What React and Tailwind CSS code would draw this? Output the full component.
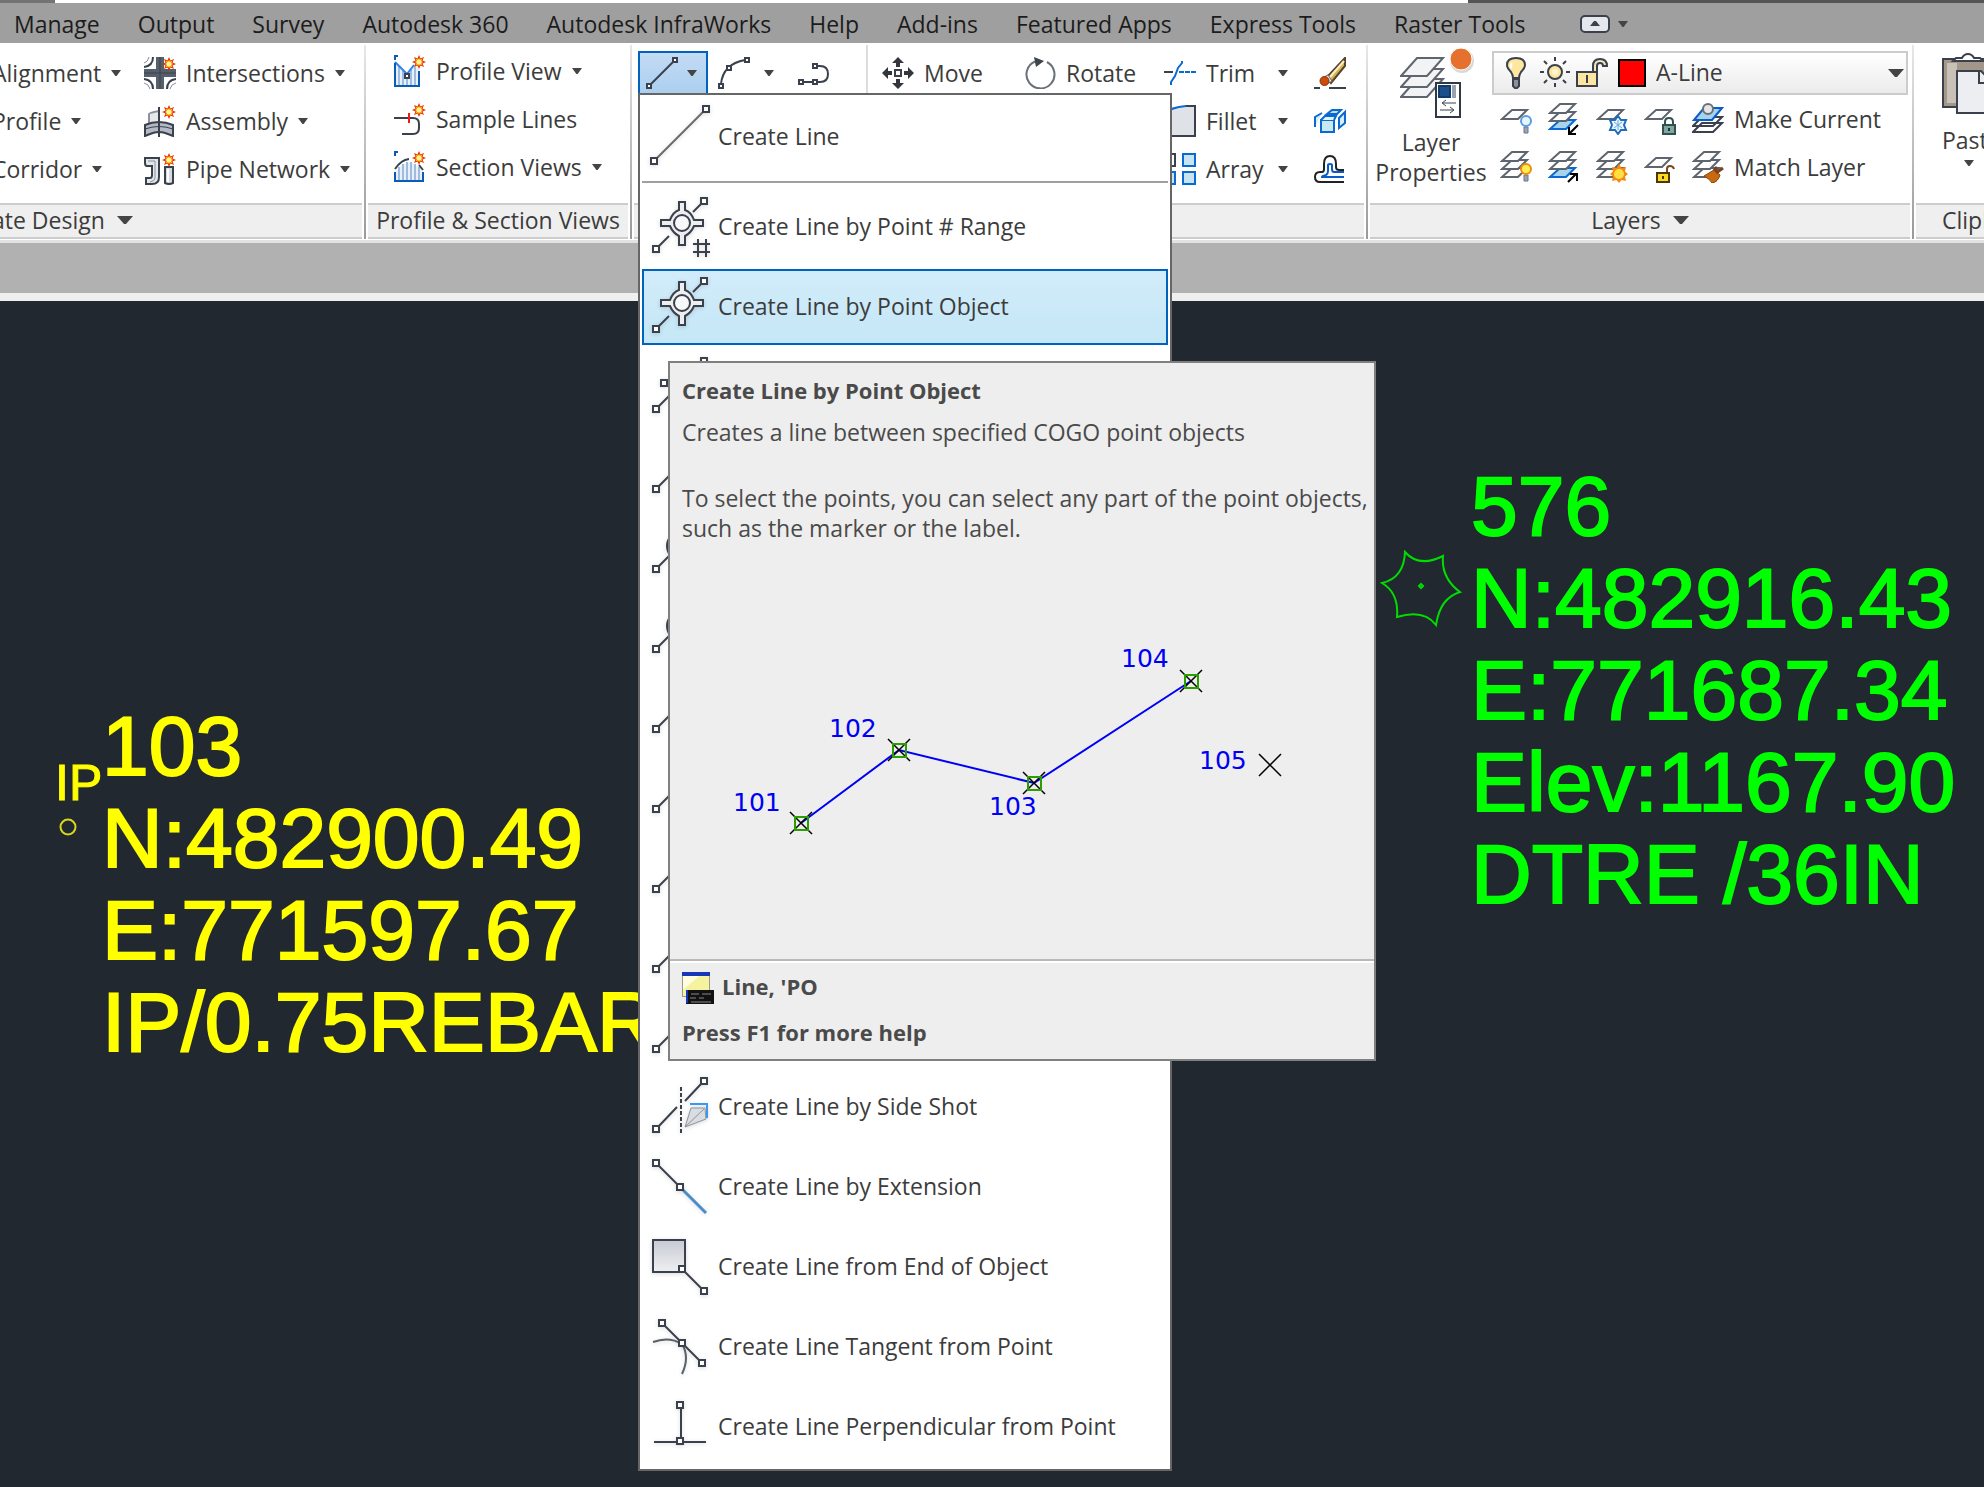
import React from 'react';
import clsx from 'clsx';

const tabs = [
  'Manage',
  'Output',
  'Survey',
  'Autodesk 360',
  'Autodesk InfraWorks',
  'Help',
  'Add-ins',
  'Featured Apps',
  'Express Tools',
  'Raster Tools',
];

const INK = '#3a414c';

const Caret = ({wide}) => (
  <svg className={wide ? 'w-4 h-2 shrink-0' : 'w-[10px] h-[6px] shrink-0'} viewBox="0 0 16 8" preserveAspectRatio="none">
    <path d="M0 0h16L9 8H7z" fill="#444" />
  </svg>
);

const Icon = ({children, className}) => (
  <svg className={clsx('w-8 h-8 shrink-0', className)} viewBox="0 0 32 32" fill="none" stroke={INK} strokeWidth="2">
    {children}
  </svg>
);

// small "new object" burst in the top right corner of the create icons
const Burst = () => (
  <g transform="translate(18 0)" stroke="none">
    <path d="M7 0l1.5 3.5L12 2l-1.500 3.500L14 7l-3.500 1.500L12 12l-3.500-1.500L7 14l-1.500-3.500L2 12l1.500-3.500L0 7l3.500-1.500L2 2l3.500 1.500z" fill="#e03000" />
    <path d="M7 2.500l1 2 2.500-1-1 2.500 2 1-2 1 1 2.500-2.500-1-1 2-1-2-2.500 1 1-2.500-2-1 2-1-1-2.500 2.500 1z" fill="#ffb400" />
    <circle cx="7" cy="7" r="2.500" fill="#fff2a0" />
  </g>
);

const IntersectionIcon = () => (
  <Icon>
    <path d="M12 0h8v12h12v8H20v12h-8V20H0v-8h12z" fill="#56606c" stroke="none" />
    <path d="M0 16h32M16 0v32" stroke="#3a414c" strokeWidth="1" />
    <path d="M0 10q9-1 9-10M0 22q9 1 9 10M32 22q-9 1-9 10" />
    <path d="M0 26q5 1 6 6M32 26q-5 1-6 6M0 6q4-1 5-6" strokeWidth="1" stroke="#8b929c" />
    <Burst />
  </Icon>
);

const AssemblyIcon = () => (
  <Icon>
    <path d="M5 18V9q0-1 10-3v12z" fill="#e6e8ec" stroke="#8b929c" />
    <path d="M1 31V20q14-6 28 0v11l-5-2q-9-4-18 0z" fill="#b3bac6" />
    <path d="M1 24q14-5 28 0" strokeWidth="1" />
    <path d="M15 2v30" />
    <Burst />
  </Icon>
);

const PipeIcon = () => (
  <Icon>
    <path d="M1 5h14v19q0 7-7 7H2v-6h4q2 0 2-3v-9H3q-2 0-2-3z" fill="#e2e5ea" />
    <path d="M4 8h7v17q0 3-5 4" stroke="#8b929c" strokeWidth="1" />
    <path d="M21 30V14h8v16q-4 2-8 0z" fill="#d5d9e0" />
    <path d="M24 16v13" stroke="#fff" />
    <Burst />
  </Icon>
);

const ProfileViewIcon = () => (
  <Icon>
    <path d="M2 8l10 11L20 9l5 5v16H2z" fill="#e8f0fa" stroke="none" />
    <path d="M5 12v18M9 16v14M13 20v10M17 14v16M21 12v18" stroke="#9fbbe0" />
    <path d="M1 5V1h3" stroke="#0a5cb8" />
    <path d="M1 7l12 12 7-9" stroke="#2f83e8" />
    <path d="M1 8v23h24V16" stroke="#0a5cb8" />
    <path d="M11 19h4v4h-4z" fill="#fff" />
    <Burst />
  </Icon>
);

const SampleLinesIcon = () => (
  <Icon>
    <path d="M0 15h19q6 0 6 6v4q0 6-6 6H8" />
    <path d="M15 10v10" stroke="#f01818" />
    <Burst />
  </Icon>
);

const SectionViewsIcon = () => (
  <Icon>
    <path d="M2 20q13-17 26 0v10H2z" fill="#e8f0fa" stroke="none" />
    <path d="M5 16v14M9 13v17M13 11v19M17 11v19M21 13v17M25 16v14" stroke="#9fbbe0" />
    <path d="M1 5V1h3" stroke="#0a5cb8" />
    <path d="M1 18Q7 9 15 8M25 14l4 5" />
    <path d="M1 21v9h28v-9" stroke="#0a5cb8" />
    <Burst />
  </Icon>
);

const LineIcon = () => (
  <Icon>
    <path d="M5 27L27 5" />
    <path d="M1 27h4v4H1zM27 1h4v4h-4z" fill="#fff" />
  </Icon>
);

const ArcIcon = () => (
  <Icon>
    <path d="M3 27Q5 7 27 3" />
    <path d="M1 27h4v4H1zM9 9h4v4H9zM27 1h4v4h-4z" fill="#fff" />
  </Icon>
);

const PolylineIcon = () => (
  <Icon>
    <path d="M5 25h17q8 0 8-8t-8-8h-2" />
    <path d="M1 23h4v4H1zM15 23h4v4h-4zM15 7h4v4h-4z" fill="#fff" />
  </Icon>
);

const MoveIcon = () => (
  <Icon>
    <path d="M13 13h6v6h-6z" />
    <path d="M16 0l6 6h-4v4h-4V6h-4zM16 32l6-6h-4v-4h-4v4h-4zM0 16l6-6v4h4v4H6v4zM32 16l-6-6v4h-4v4h4v4z" fill="#33373d" stroke="none" />
  </Icon>
);

const RotateIcon = () => (
  <Icon>
    <path d="M11 4.500A14 14 0 1 0 23 5" stroke="#6b7078" />
    <path d="M10 0l10 4-8 6z" fill="#3f444c" stroke="none" />
  </Icon>
);

const TrimIcon = () => (
  <Icon>
    <path d="M0 15h9" />
    <path d="M7 28v-3l4-6 3-8 4-5V4" stroke="#0a6ad0" />
    <path d="M15 15h17" stroke="#0a6ad0" strokeDasharray="5 1" />
  </Icon>
);

const FilletIcon = () => (
  <Icon>
    <path d="M0 8Q8 1 16 1h15v30H0z" fill="#dfe2e6" stroke="none" />
    <path d="M22 1h9v30H0" />
    <path d="M0 10Q6 2 22 1" stroke="#0a6ad0" />
  </Icon>
);

const ArrayIcon = () => (
  <Icon>
    <path d="M1 1h10v12H1z" fill="#fff" />
    <path d="M19 1h12v12H19zM1 19h10v12H1zM19 19h12v12H19z" fill="#c8e4f2" stroke="#0a6ad0" />
  </Icon>
);

const EraserIcon = () => (
  <Icon>
    <path d="M31 1L13 20l4 6L31 9z" fill="#d8b25a" stroke="#54452a" />
    <path d="M30 4L15 21" stroke="#fff0c0" />
    <path d="M14 18l4 6-3 2-5-6z" fill="#e8eaee" stroke="#666" strokeWidth="1" />
    <circle cx="10.500" cy="24" r="4.500" fill="#d04a08" stroke="#8a3208" strokeWidth="1" />
    <path d="M0 31h6M15 31h17" />
  </Icon>
);

const ExplodeIcon = () => (
  <Icon>
    <path d="M13 9l5-4h9l-4 4z" fill="#b9e0f0" stroke="#0a6ad0" />
    <path d="M1 22V12l7-4M25 23l6-5V7l-6 6z" fill="#d5edf6" stroke="#0a6ad0" />
    <path d="M7 15h13v12H7z" fill="#c8e8f4" stroke="#0a6ad0" />
    <path d="M7 15l4-4h11l-2 4" stroke="#0a6ad0" fill="#e2f3fa" />
  </Icon>
);

const OffsetIcon = () => (
  <Icon>
    <path d="M30 29H6q-5 0-5-5t5-5h2q2 0 2-3v-5q0-8 6-8t6 8v3q0 3 3 3h5" stroke="#222" />
    <path d="M30 24H8q0-1 4-2 2-1 2-4v-6q0-1 2-1t2 1v4q0 3 2 3h10" stroke="#0a5cc8" />
  </Icon>
);

const Sheet = ({y = 7, fill = '#fff', stroke = '#5f656f'}) => (
  <path d={`M12 ${y}h15l-9 9H2z`} fill={fill} stroke={stroke} />
);

const Stack = ({bottom, top}) => (
  <g>
    <Sheet y={17} fill={bottom ? '#a5d4ec' : '#fff'} stroke={bottom || '#5f656f'} />
    <Sheet y={9} />
    <Sheet y={1} fill={top ? '#a5d4ec' : '#fff'} stroke={top || '#5f656f'} />
  </g>
);

const Bulb = ({ring, fill}) => (
  <g>
    <path d="M24 24h4v6h-4z" fill="#9aa6b8" stroke="#6d7786" strokeWidth="1" />
    <circle cx="26" cy="18" r="5" fill={fill} stroke={ring} />
  </g>
);

const LayerOffIcon = () => <Icon><Sheet /><Bulb ring="#5b9be0" fill="#e8f4ff" /></Icon>;
const LayerOnIcon = () => <Icon><Stack /><Bulb ring="#f08c10" fill="#ffee50" /></Icon>;

const LayerIsolateIcon = () => (
  <Icon><Stack bottom="#0a6ad0" /><path d="M30 22l-8 8M21 24v7h7" stroke="#000" /></Icon>
);

const LayerUnisolateIcon = () => (
  <Icon><Stack bottom="#0a6ad0" /><path d="M20 31l8-8M22 23h7v7" stroke="#000" /></Icon>
);

const LayerFreezeIcon = () => (
  <Icon>
    <Sheet />
    <path d="M22 13l3 4h5l-2 5 2 5h-5l-3 4-3-4h-5l2-5-2-5h5z" fill="#e8f6ff" stroke="#1f6cb8" />
    <path d="M22 17v10M18 19l8 6M26 19l-8 6" stroke="#6aa8dc" strokeWidth="1" />
  </Icon>
);

const LayerThawIcon = () => (
  <Icon>
    <Stack />
    <path d="M23 13l2.500 4 4.500-1-1 4.500 3 2.500-3 2.500 1 4.500-4.500-1-2.500 3-2.500-3-4.500 1 1-4.500-3-2.500 3-2.500-1-4.500 4.500 1z" fill="#f58a10" stroke="none" />
    <circle cx="23" cy="23" r="5" fill="#ffe040" stroke="none" />
  </Icon>
);

const LayerLockIcon = () => (
  <Icon>
    <Sheet />
    <path d="M21 22v-3q0-4 4-4t4 4v3" stroke="#33504e" />
    <path d="M19 22h12v9H19z" fill="#7fa8a2" stroke="#33504e" />
    <path d="M25 25v3" stroke="#1f3432" />
  </Icon>
);

const LayerUnlockIcon = () => (
  <Icon>
    <Sheet />
    <path d="M23 22v-4q0-3 3-3t4 3" stroke="#7a4420" />
    <path d="M13 22h12v9H13z" fill="#ffd820" stroke="#4a3808" />
    <path d="M19 25v3" stroke="#4a3808" />
  </Icon>
);

const MakeCurrentIcon = () => (
  <Icon>
    <path d="M10 20h20l-9 9H1zM10 14h20l-9 9H1z" fill="#fff" />
    <path d="M12 5h18L20 17H2z" fill="#a5d4ec" stroke="#0a5cc8" />
    <circle cx="16" cy="6" r="5" fill="#e4e6ea" stroke="#6b7078" />
  </Icon>
);

const MatchLayerIcon = () => (
  <Icon>
    <Stack />
    <path d="M12 25l10-6 6 5q-2 7-8 8-2-4-8-7z" fill="#c86a10" stroke="#8a4408" strokeWidth="1" />
    <path d="M24 22l7-5M22 20l3-4" stroke="#7a4420" strokeWidth="3" />
  </Icon>
);

const OnBulbIcon = () => (
  <Icon>
    <path d="M13 21q0-3-2-6-4-4-4-7 0-7 9-7t9 7q0 3-4 7-2 3-2 6z" fill="#fde7a0" />
    <path d="M13 22v7l3 3 3-3v-7z" fill="#8b929c" />
    <path d="M12 6q-2 3 0 5" stroke="#fff" />
  </Icon>
);

const SunIcon = () => (
  <Icon>
    <circle cx="15" cy="15" r="7" fill="#fde7a0" />
    <circle cx="15" cy="15" r="3" fill="#fff6d0" stroke="none" />
    <path d="M15 0v4M15 26v4M0 15h4M26 15h4M4 4l3 3M23 23l3 3M26 4l-3 3M7 23l-3 3" />
  </Icon>
);

const OpenLockIcon = () => (
  <Icon>
    <path d="M17 15V9q0-7 7-7t7 7h-4q0-3-3-3t-3 3v6z" fill="#f0e6c0" />
    <path d="M1 15h20v14H1z" fill="#fde7a0" />
    <path d="M11 18v8" />
  </Icon>
);

const LayerPropertiesIcon = () => (
  <svg className="w-[76px] h-[72px]" viewBox="0 0 76 72" fill="none" stroke="#5f656f" strokeWidth="2">
    <path d="M17 32h26L27 50H1z" fill="#f2f3f4" />
    <path d="M17 22h26L27 40H1z" fill="#f2f3f4" />
    <path d="M17 11h26L27 29H1z" fill="#f2f3f4" />
    <path d="M36 36h24v34H36z" fill="#fff" stroke="#2f3844" />
    <path d="M39 39h11v11H39z" fill="#1c4f8c" stroke="#123a6a" />
    <path d="M54 38v13" stroke="#9aa2ae" strokeWidth="4" />
    <path d="M43 56h13M40 63h13M46 53l-4 3 4 3M50 60l4 3-4 3" stroke={INK} strokeWidth="1" />
    <circle cx="62" cy="14" r="12" fill="#000" opacity=".15" stroke="none" />
    <circle cx="61" cy="12" r="11" fill="#e6702e" stroke="#fff" strokeWidth="1" />
  </svg>
);

const PasteIcon = () => (
  <svg className="w-[68px] h-16" viewBox="0 0 68 64" fill="none" stroke={INK} strokeWidth="2">
    <path d="M1 6h50v48H1z" fill="#a3978a" />
    <path d="M5 10h10v40H5z" fill="#c9c1b8" stroke="none" />
    <path d="M11 8l3-3h6q2-4 6-4t6 4h6l3 3z" fill="#fff" />
    <path d="M15 18h24l12 12v30H15z" fill="#eceef2" />
    <path d="M37 18v12h14" />
  </svg>
);

const Node = ({x, y}) => <rect x={x + 1} y={y + 1} width="6" height="6" fill="#fff" />;

const MenuIcon = ({children}) => (
  <svg className="w-16 h-16 shrink-0 drop-shadow-sm" viewBox="0 0 64 64" fill="none" stroke={INK} strokeWidth="2">
    {children}
  </svg>
);

const Marker = () => (
  <g>
    <path d="M45 17l8-8M11 51l10-10" />
    <path
      d="M31 7h6v8q6 2 9 10h9v6h-9q-3 7-9 10v9h-6v-9q-6-3-9-10h-9v-6h9q3-8 9-10z"
      fill="#eceef0"
    />
    <circle cx="34" cy="28" r="8" fill="#f6f8fa" />
    <Node x={52} y={2} />
    <Node x={4} y={50} />
  </g>
);

const Segment = ({children}) => (
  <MenuIcon>
    <path d="M10 52L54 8" />
    {children}
    <Node x={52} y={2} />
    <Node x={4} y={50} />
  </MenuIcon>
);

const menuItems = [
  {
    label: 'Create Line by Point # Range',
    icon: (
      <MenuIcon>
        <Marker />
        <path d="M50 44v18M58 44v18M45 49h17M45 57h17" />
      </MenuIcon>
    ),
  },
  {label: 'Create Line by Point Object', icon: <MenuIcon><Marker /></MenuIcon>, active: true},
  {name: 'Create Line by Point Name', icon: <Segment><Node x={12} y={24} /></Segment>},
  {name: 'Create Line by Northing/Easting', icon: <Segment />},
  {name: 'Create Line by Grid Northing/Easting', icon: <Segment><circle cx="34" cy="31" r="15" /></Segment>},
  {name: 'Create Line by Latitude/Longitude', icon: <Segment><circle cx="34" cy="31" r="15" /></Segment>},
  {name: 'Create Line by Bearing', icon: <Segment />},
  {name: 'Create Line by Azimuth', icon: <Segment />},
  {name: 'Create Line by Angle', icon: <Segment />},
  {name: 'Create Line by Deflection', icon: <Segment />},
  {name: 'Create Line by Station/Offset', icon: <Segment />},
  {
    label: 'Create Line by Side Shot',
    icon: (
      <MenuIcon>
        <path d="M10 52l19-20M37 26L53 9" />
        <path d="M33 12v46" strokeDasharray="4 2" />
        <path d="M43 33h14l1 11-21 8z" fill="#d9dce1" stroke="#8f949b" strokeWidth="1" />
        <path d="M37 52l19-18" stroke="#8f949b" strokeWidth="1" />
        <path d="M42 29h17v14" stroke="#3b97f5" />
        <Node x={52} y={2} />
        <Node x={4} y={50} />
      </MenuIcon>
    ),
  },
  {
    label: 'Create Line by Extension',
    icon: (
      <MenuIcon>
        <path d="M10 10l22 22" />
        <path d="M34 34l24 24" stroke="#4a8cc8" strokeWidth="3" />
        <Node x={4} y={4} />
        <Node x={28} y={28} />
      </MenuIcon>
    ),
  },
  {
    label: 'Create Line from End of Object',
    icon: (
      <MenuIcon>
        <defs>
          <linearGradient id="solid" x2="0" y2="1">
            <stop stopColor="#c6cad3" />
            <stop offset="1" stopColor="#eff0f2" />
          </linearGradient>
        </defs>
        <path d="M5 5h32v32H5z" fill="url(#solid)" />
        <path d="M36 36l18 18" />
        <Node x={30} y={30} />
        <Node x={52} y={52} />
      </MenuIcon>
    ),
  },
  {
    label: 'Create Line Tangent from Point',
    icon: (
      <MenuIcon>
        <path d="M14 8l40 40" />
        <path d="M5 27q16-6 29 2 8 13 0 30" stroke="#5a5f68" />
        <Node x={10} y={4} />
        <Node x={30} y={24} />
        <Node x={50} y={44} />
      </MenuIcon>
    ),
  },
  {
    label: 'Create Line Perpendicular from Point',
    icon: (
      <MenuIcon>
        <path d="M33 10v37M6 47h52" />
        <Node x={28} y={6} />
        <Node x={28} y={42} />
      </MenuIcon>
    ),
  },
];

const points = [
  {id: '101', x: 131, y: 460, lx: 63, ly: 448, on: true},
  {id: '102', x: 229, y: 387, lx: 159, ly: 374, on: true},
  {id: '103', x: 364, y: 420, lx: 319, ly: 452, on: true},
  {id: '104', x: 521, y: 318, lx: 451, ly: 304, on: true},
  {id: '105', x: 600, y: 402, lx: 529, ly: 406},
];

const PointDiagram = () => (
  <svg className="block w-full h-[336px]" viewBox="0 260 704 336" fill="none">
    <polyline points="131,460 229,387 364,420 521,318" stroke="#0000f5" strokeWidth="2" />
    {points.map(p => (
      <g key={p.id}>
        <path d={`M${p.x - 11} ${p.y - 11}l22 22m0 -22l-22 22`} stroke="#000" strokeWidth="1.500" />
        {p.on && <rect x={p.x - 6} y={p.y - 6} width="13" height="13" stroke="#2aa000" strokeWidth="2" />}
        <text x={p.lx} y={p.ly} fill="#0000f5" className="text-[25px] font-['DejaVu_Sans',sans-serif]">{p.id}</text>
      </g>
    ))}
  </svg>
);

const Tooltip = () => (
  <div role="tooltip" className="absolute z-20 left-[26px] top-[94px] w-[708px] border-2 border-[#808080] bg-[#eee] text-[#4a4a4a] leading-[30px]">
    <div className="pl-3 pt-3">
      <p className="text-[22px] font-bold">Create Line by Point Object</p>
      <p className="mt-3">Creates a line between specified COGO point objects</p>
      <p className="mt-9 whitespace-nowrap">
        To select the points, you can select any part of the point objects,
        <br />
        such as the marker or the label.
      </p>
    </div>
    <div className="pt-[80px]">
      <PointDiagram />
    </div>
    <div className="border-t-2 border-[#b9b9b9] pl-3 pb-3 text-[22px] font-bold">
      <div className="border-t-2 border-white -ml-3" />
      <div className="flex items-center gap-2 pt-2">
        <svg className="w-8 h-8" viewBox="0 0 32 32">
          <path d="M0 0h28v25H0z" fill="#9a9a86" />
          <path d="M1 4h26v20H1z" fill="#f6f3a0" />
          <path d="M1 4h16L1 18z" fill="#fffde0" />
          <path d="M0 0h28v4H0z" fill="#1438b8" />
          <path d="M4 18h28v14H4z" fill="#111" />
          <path d="M4 18h2v13H4z" fill="#1438b8" />
          <path d="M9 22h8M20 22h9M8 26h6M17 26h5M9 30h20" stroke="#888" strokeWidth="1" />
        </svg>
        <span className="pb-1">Line, 'PO</span>
      </div>
      <p className="mt-3">Press F1 for more help</p>
    </div>
  </div>
);

const LineMenu = () => (
  <div role="menu" className="absolute z-10 left-0 top-full w-[534px] bg-white border-2 border-[#666] p-0.5">
    <button role="menuitem" className="w-full h-20 flex items-center gap-[6px] pl-[6px] text-left">
      <MenuIcon>
        <path d="M6 56L58 4" stroke="#6a6a6a" />
        <Node x={54} y={0} />
        <Node x={2} y={52} />
      </MenuIcon>
      <span className="pb-0.5">Create Line</span>
    </button>
    <div className="border-t-2 border-[#a0a0a0] my-1" />
    {menuItems.map(item => (
      <div key={item.label || item.name} className="relative py-0.5">
        <button
          role="menuitem"
          aria-label={item.name}
          className={clsx(
            'w-full h-[76px] flex items-center gap-[6px] pl-1 border-2 text-left',
            item.active ? 'border-[#0063be] bg-linear-to-b from-[#d2ecfb] to-[#c5e7f6]' : 'border-transparent'
          )}
        >
          {item.icon}
          {item.label && <span className="pb-0.5">{item.label}</span>}
        </button>
        {item.active && <Tooltip />}
      </div>
    ))}
  </div>
);

const Tool = ({icon, label, caret, className}) => (
  <button className={clsx('h-12 flex items-center text-left whitespace-nowrap', className)}>
    {icon}
    <span className={icon ? 'ml-[10px] mr-[10px]' : 'mr-[10px]'}>{label}</span>
    {caret && <Caret />}
  </button>
);

const Panel = ({title, caret, children, className, titleClass}) => (
  <section className={clsx('shrink-0 flex flex-col h-[194px]', className)}>
    <div className="flex-1 flex">{children}</div>
    <h2 className={clsx('h-9 flex items-center gap-3 pb-0.5 border-y-2 border-[#ccc] bg-[#efefef] whitespace-nowrap', titleClass)}>
      {title}
      {caret && <Caret wide />}
    </h2>
  </section>
);

const Divider = () => <div className="w-0.5 mx-0.5 shrink-0 bg-linear-to-b from-[#e8e8e8] to-[#999]" />;

const layerTools = [
  [LayerOffIcon, 'Off'],
  [LayerIsolateIcon, 'Isolate'],
  [LayerFreezeIcon, 'Freeze'],
  [LayerLockIcon, 'Lock'],
];

const layerUndoTools = [
  [LayerOnIcon, 'Turn All Layers On'],
  [LayerUnisolateIcon, 'Unisolate'],
  [LayerThawIcon, 'Thaw All Layers'],
  [LayerUnlockIcon, 'Unlock'],
];

const LayerRow = ({tools, icon, label}) => (
  <div className="flex h-12 items-center gap-4 pl-2">
    {tools.map(([ToolIcon, name]) => (
      <button key={name} aria-label={name}><ToolIcon /></button>
    ))}
    <Tool icon={icon} label={label} />
  </div>
);

const Ribbon = () => (
  <div className="flex pt-0.5 pb-px bg-white">
    <Panel title="ate Design" caret className="w-[362px]" titleClass="-ml-2">
      <div className="w-[148px] pt-1 -ml-2">
        <Tool label="Alignment" caret />
        <Tool label="Profile" caret />
        <Tool label="Corridor" caret />
      </div>
      <div className="pt-1 pl-1">
        <Tool icon={<IntersectionIcon />} label="Intersections" caret />
        <Tool icon={<AssemblyIcon />} label="Assembly" caret />
        <Tool icon={<PipeIcon />} label="Pipe Network" caret />
      </div>
    </Panel>
    <Divider />
    <Panel title="Profile & Section Views" className="w-[260px]" titleClass="justify-center">
      <div className="pt-0.5 pl-[26px]">
        <Tool icon={<ProfileViewIcon />} label="Profile View" caret />
        <Tool icon={<SampleLinesIcon />} label="Sample Lines" />
        <Tool icon={<SectionViewsIcon />} label="Section Views" caret />
      </div>
    </Panel>
    <Divider />
    <Panel className="w-[232px]">
      <div className="relative ml-1 mt-[6px] h-[42px]">
        <button aria-label="Line" aria-haspopup="menu" className="w-[70px] h-[42px] flex items-center gap-[9px] pl-[6px] border-2 border-b-0 border-[#0063be] bg-linear-to-b from-[#c3dbf4] to-[#abcff0]">
          <LineIcon />
          <Caret />
        </button>
        <LineMenu />
      </div>
      <button aria-label="Arc" className="ml-[10px] mt-1 h-12 flex items-center gap-[14px]">
        <ArcIcon />
        <Caret />
      </button>
      <button aria-label="Polyline" className="ml-6 mt-1 h-12">
        <PolylineIcon />
      </button>
    </Panel>
    <div className="w-0.5 shrink-0 bg-[#ddd]" />
    <Panel className="w-[496px]">
      <div className="w-[144px] pl-[14px] pt-1">
        <Tool icon={<MoveIcon />} label="Move" />
      </div>
      <div className="w-[152px] pl-3 pt-1">
        <Tool icon={<RotateIcon />} label="Rotate" />
      </div>
      <div className="w-[150px] pt-1">
        <div className="flex items-center justify-between pr-[26px]">
          <Tool icon={<TrimIcon />} label="Trim" /><Caret />
        </div>
        <div className="flex items-center justify-between pr-[26px]">
          <Tool icon={<FilletIcon />} label="Fillet" /><Caret />
        </div>
        <div className="flex items-center justify-between pr-[26px]">
          <Tool icon={<ArrayIcon />} label="Array" /><Caret />
        </div>
      </div>
      <div className="flex flex-col pt-1">
        <button aria-label="Erase" className="h-12"><EraserIcon /></button>
        <button aria-label="Explode" className="h-12"><ExplodeIcon /></button>
        <button aria-label="Offset" className="h-12"><OffsetIcon /></button>
      </div>
    </Panel>
    <Divider />
    <Panel title="Layers" caret className="w-[540px]" titleClass="justify-center">
      <button className="w-[122px] flex flex-col items-center leading-[30px]">
        <span className="pl-[14px] pt-0.5"><LayerPropertiesIcon /></span>
        <span className="mt-2">Layer</span>
        <span>Properties</span>
      </button>
      <div className="pt-[6px]">
        <div className="relative w-[416px] h-11 flex items-center border-2 border-[#ccc] bg-linear-to-b from-white to-[#ebebeb] pl-[6px]">
          <OnBulbIcon />
          <span className="ml-2"><SunIcon /></span>
          <span className="ml-1"><OpenLockIcon /></span>
          <span className="ml-[10px] w-7 h-7 shrink-0 border-2 border-black bg-[#f00]" />
          <select aria-label="Layer" className="flex-1 h-full pl-[10px] pb-0.5 appearance-none bg-transparent">
            <option>A-Line</option>
          </select>
          <span className="absolute right-0.5 pointer-events-none flex"><Caret wide /></span>
        </div>
        <LayerRow tools={layerTools} icon={<MakeCurrentIcon />} label="Make Current" />
        <LayerRow tools={layerUndoTools} icon={<MatchLayerIcon />} label="Match Layer" />
      </div>
    </Panel>
    <Divider />
    <Panel title="Clipboard" className="w-[120px]" titleClass="pl-[26px]">
      <button className="pl-[26px] pt-2 flex flex-col items-start">
        <PasteIcon />
        <span className="mt-[6px]">Paste</span>
        <span className="pl-[22px] pt-0.5 flex"><Caret /></span>
      </button>
    </Panel>
  </div>
);

const PointLabel = ({lines, className}) => (
  <div className={clsx("absolute text-[84px] leading-[92px] whitespace-nowrap [-webkit-text-stroke:2px] font-['Liberation_Sans',Arial,sans-serif]", className)}>
    {lines.map(line => <p key={line}>{line}</p>)}
  </div>
);

const Drawing = () => (
  <main className="relative flex-1 bg-[#212830]">
    <p className="absolute left-[55px] top-[452px] text-[50px] leading-[60px] text-[#ff0] [-webkit-text-stroke:1px] font-['Liberation_Sans',Arial,sans-serif]">IP</p>
    <svg className="absolute left-[58px] top-[516px] w-5 h-5" viewBox="0 0 20 20" fill="none">
      <circle cx="10" cy="10" r="7.500" stroke="#d8d81a" strokeWidth="2" />
    </svg>
    <PointLabel className="left-[102px] top-[399px] text-[#ff0]" lines={['103', 'N:482900.49', 'E:771597.67', 'IP/0.75REBAR']} />
    <svg className="absolute left-[1380px] top-[249px] w-[84px] h-20" viewBox="0 0 84 80" fill="none" stroke="#0d0" strokeWidth="2">
      <path d="M25 2q14 16 38 4-2 22 17 36-20 6-24 33-12-16-39-8 2-24-15-34 22-5 23-31z" />
      <path d="M41 34l2 2-2 2-2-2z" />
    </svg>
    <PointLabel className="left-[1471px] top-[159px] text-[#0f0]" lines={['576', 'N:482916.43', 'E:771687.34', 'Elev:1167.90', 'DTRE /36IN']} />
  </main>
);

const App = () => (
  <div className="min-h-screen flex flex-col overflow-hidden bg-white text-[23px] text-[#3c3c3c] font-['Open_Sans',sans-serif]">
    <div className="h-[3px] flex justify-between">
      <div className="w-[55px] bg-[#737373]" />
      <div className="w-[516px] bg-[#555]" />
    </div>
    <nav className="h-10 flex items-center gap-[38px] pt-0.5 pl-[14px] bg-[#9f9f9f] text-[#1c1c1c] whitespace-nowrap">
      {tabs.map(tab => <button key={tab}>{tab}</button>)}
      <button aria-label="Minimize ribbon" className="ml-4 flex items-center gap-2">
        <svg className="w-[30px] h-[18px]" viewBox="0 0 30 18">
          <rect x="1" y="1" width="28" height="16" rx="4" fill="#e4e7ec" stroke={INK} strokeWidth="2" />
          <path d="M10 11h10l-4-5h-2z" fill={INK} />
        </svg>
        <Caret />
      </button>
    </nav>
    <Ribbon />
    <div className="h-[53px] border-t-[3px] border-[#e2e2e2] bg-[#b1b1b1]" />
    <div className="h-2 bg-[#efefef]" />
    <Drawing />
  </div>
);

App.displayName = 'App';
export default App;
